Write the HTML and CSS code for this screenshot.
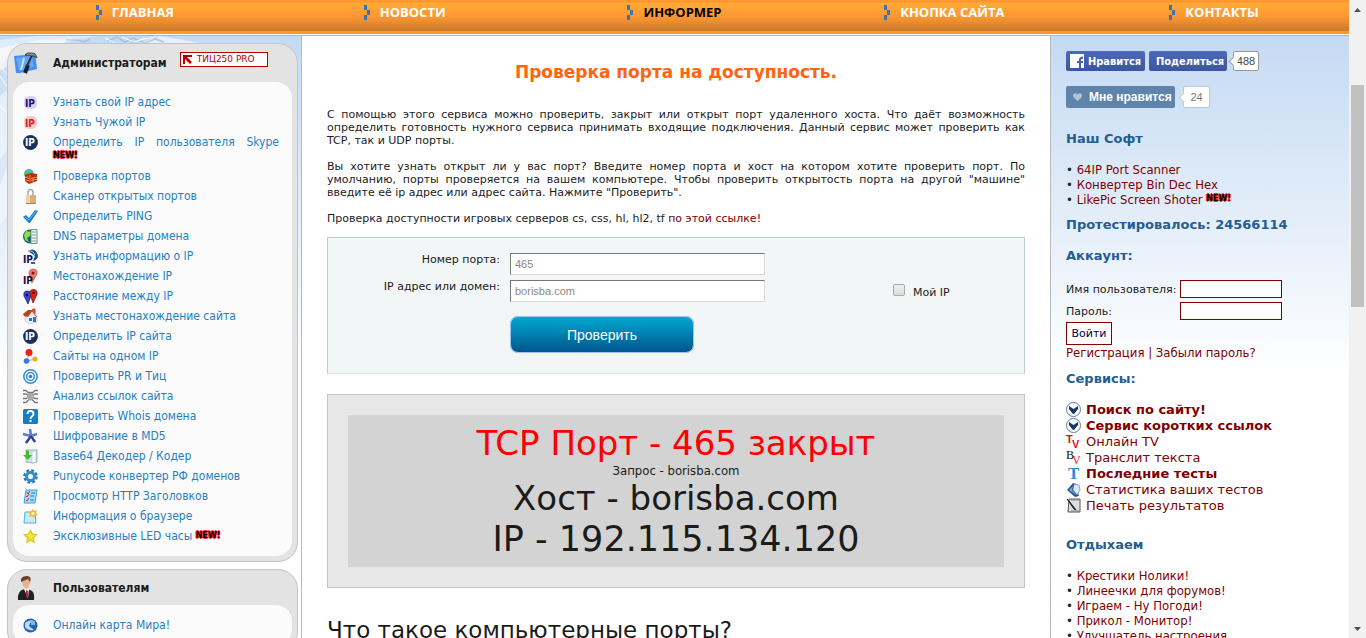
FILE: index.html
```html
<!DOCTYPE html>
<html lang="ru">
<head>
<meta charset="utf-8">
<title>Проверка порта на доступность</title>
<link rel="stylesheet" href="styles.css">
</head>
<body>
<div class="viewport">
<div class="page">
  <nav class="nav">
    <a href="#"><svg class="chev" viewBox="0 0 6 15"><path d="M0 0h3v5h3v5h-3v5h-3v-5h3v-5h-3z"/></svg>ГЛАВНАЯ</a>
    <a href="#"><svg class="chev" viewBox="0 0 6 15"><path d="M0 0h3v5h3v5h-3v5h-3v-5h3v-5h-3z"/></svg>НОВОСТИ</a>
    <a href="#" class="active"><svg class="chev" viewBox="0 0 6 15"><path d="M0 0h3v5h3v5h-3v5h-3v-5h3v-5h-3z"/></svg>ИНФОРМЕР</a>
    <a href="#"><svg class="chev" viewBox="0 0 6 15"><path d="M0 0h3v5h3v5h-3v5h-3v-5h3v-5h-3z"/></svg>КНОПКА САЙТА</a>
    <a href="#"><svg class="chev" viewBox="0 0 6 15"><path d="M0 0h3v5h3v5h-3v5h-3v-5h3v-5h-3z"/></svg>КОНТАКТЫ</a>
  </nav>
  <div class="columns">
    <aside class="left">
      <svg class="ice" viewBox="0 0 301 220"><g fill="#fff"><path opacity=".45" d="M0 4l36-4h60l-70 14-26 14zM0 60l7-6v60l-7 10zM0 150l7-20v50l-7 9z"/><path opacity=".6" d="M0 12l40-8 40-1-50 12-30 20zM160 0l40 7h-60z"/></g><g fill="none" stroke="#8fb2d8" stroke-width="1.500" opacity=".6"><path d="M66 4h12l6 2 6-3M108 5l9-4 8 5 8-4 12 5 10-4 8 3M152 1l12 5M128 3l8 5"/></g><g stroke="#fff" fill="none"><path d="M105 2l10 5M122 1l12 5 12-4M140 4l15-3M0 30l8 10M0 40l8 12M0 70l6 6"/></g></svg>
      <section class="panel">
        <h2 class="panel-head first"><svg class="head-icon" viewBox="0 0 26 24"><path d="M1 5l11-1 1-2h9l2 16-17 4H3z" fill="#438cf0"/><path d="M3 7l16-3 2 12-15 4z" fill="#64a7f8"/><path d="M8 19l3-12" stroke="#c8e1ff" stroke-width="2"/><path d="M12 22l3-8" stroke="#17202b" stroke-width="4"/><path d="M14 15l5-11" stroke="#2d3238" stroke-width="2"/><path d="M12 4q2-3 7-2 4 0 5 5-3-3-6-2-2-2-4 0z" fill="#8b949b" stroke="#222" stroke-width=".7"/></svg>Администраторам<a class="pr" href="#"><svg viewBox="0 0 9 9"><path d="M0 0h9v2H4l5 5-2 2-5-5v5H0z" fill="#b90000"/></svg>ТИЦ250 PRO</a></h2>
        <ul class="menu">
          <li><svg viewBox="0 0 15 15"><rect x="1" y="1" width="13" height="13" rx="5" fill="#d7d2ee"/><text class="ip" x="2" y="12" fill="#1b1464">IP</text></svg><a href="#">Узнать свой IP адрес</a></li>
          <li><svg viewBox="0 0 15 15"><rect x="1" y="1" width="13" height="13" rx="5" fill="#ffc9c7"/><text class="ip" x="2" y="12" fill="#d8201e">IP</text></svg><a href="#">Узнать Чужой IP</a></li>
          <li><svg viewBox="0 0 15 15"><circle cx="7.500" cy="7.500" r="7.400" fill="#16305c"/><text class="ip" x="2" y="11" fill="#fff">IP</text></svg><a href="#">Определить IP пользователя Skype <b class="new">NEW!</b></a></li>
          <li><svg viewBox="0 0 15 15"><circle cx="6" cy="5" r="5" fill="#49b7d5"/><path d="M3 1l4 3-3 3-3-2z" fill="#5cbb4a"/><path d="M2 6l6-2 6 1v7l-8 3-4-3z" fill="#b33110"/><path d="M2 8l5 2 7-2M2 11l5 1 7-2M7 6v3M4 7v2M10 9v4" stroke="#f6a252" stroke-width=".8" fill="none"/></svg><a href="#">Проверка портов</a></li>
          <li><svg viewBox="0 0 15 15"><path d="M5 8V3.500q0-3 2.500-3t2.500 3V8" fill="none" stroke="#aaa" stroke-width="1.500"/><path d="M3 6h10v9H3z" fill="#d9b078"/><path d="M3 6h4v9H3z" fill="#f0d2a2"/><path d="M3 14.500h10" stroke="#b58745"/></svg><a href="#">Сканер открытых портов</a></li>
          <li><svg viewBox="0 0 15 15"><path d="M0 8l3-2 3 3 6-8 3 1-8 12H6z" fill="#207bc9"/><path d="M2 8l4 3 7-9" stroke="#62baf0" fill="none"/></svg><a href="#">Определить PING</a></li>
          <li><svg viewBox="0 0 15 15"><circle cx="7" cy="7.500" r="7" fill="#195a89"/><path d="M3 2l5 1-1 4-3 2 2 4-4-2-1-5z" fill="#8fe03f"/><path d="M8 .500h6v14H8z" fill="#eef5f2" stroke="#689886"/><path d="M9 3h4M9 6h4M9 9h4M9 12h4" stroke="#78a090"/></svg><a href="#">DNS параметры домена</a></li>
          <li><svg viewBox="0 0 15 15"><path d="M5 2q6-4 9 2t-4 8l2-5z" fill="#204d83"/><path d="M5 2q5-1 7 4" stroke="#b8cfe8" fill="none"/><text class="ip" x="0" y="14" fill="#10134d">IP</text><path d="M8 13h4v2H8z" fill="#365e91"/></svg><a href="#">Узнать информацию о IP</a></li>
          <li><svg viewBox="0 0 15 15"><path d="M9 14L6 5q0-5 4-5 5 0 4 5z" fill="#ef7868" stroke="#9a3830" stroke-width=".5"/><circle cx="10" cy="4" r="1.500" fill="#732019"/><text class="ip" x="0" y="15" fill="#15133b">IP</text></svg><a href="#">Местонахождение IP</a></li>
          <li><svg viewBox="0 0 15 15"><path d="M5 15L1 7q-1-5 3-5 5 0 4 5z" fill="#3847ce" stroke="#151b59" stroke-width=".7"/><path d="M10 14L7 5q-1-4 3-4.500 5 0 4 5z" fill="#e02019" stroke="#6b1111" stroke-width=".7"/><circle cx="4" cy="6" r="1.300" fill="#080d46"/><circle cx="10.500" cy="4" r="1.300" fill="#580706"/></svg><a href="#">Расстояние между IP</a></li>
          <li><svg viewBox="0 0 15 15"><path d="M2 7l6-5 6 7v4l-8 2-4-3z" fill="#e9edf5" stroke="#a4b1c4" stroke-width=".5"/><path d="M0 5l5-4h5L5 8 1 7z" fill="#ba451d"/><path d="M9 1l1-1h2v5zM9 2l5 6" fill="#d65529" stroke="#ce4d22"/><path d="M6 9h3v3H6zM10 8h3v5h-3z" fill="#2b73cf"/></svg><a href="#">Узнать местонахождение сайта</a></li>
          <li><svg viewBox="0 0 15 15"><circle cx="7.500" cy="7.500" r="7.400" fill="#16305c"/><text class="ip" x="2" y="11" fill="#fff">IP</text></svg><a href="#">Определить IP сайта</a></li>
          <li><svg viewBox="0 0 15 15"><path d="M6 4l-2 8 8-2" fill="none" stroke="#aaa"/><circle cx="6" cy="3.500" r="3.500" fill="#ee201c"/><circle cx="3.500" cy="12" r="2.800" fill="#3579e8"/><circle cx="12" cy="10" r="2.600" fill="#f5a629"/></svg><a href="#">Сайты на одном IP</a></li>
          <li><svg viewBox="0 0 15 15"><g fill="none" stroke="#2c92d6" stroke-width="1.500"><circle cx="7.500" cy="7.500" r="6.700"/><circle cx="7.500" cy="7.500" r="3.900"/></g><circle cx="7.500" cy="7.500" r="1.800" fill="#2082ca"/></svg><a href="#">Проверить PR и Тиц</a></li>
          <li><svg viewBox="0 0 15 15"><path d="M0 1.500h3l2 2h5l2-2h3M0 5h3l2 1h5l2-1h3M0 9.500h3l2-1h5l2 1h3M0 13.500h3l3-3h3l3 3h3" fill="none" stroke="#777" stroke-width="1.300"/><path d="M5 4h5l1 4-2 3H6L4 8z" fill="#aaa"/></svg><a href="#">Анализ ссылок сайта</a></li>
          <li><svg viewBox="0 0 15 15"><rect width="15" height="15" rx="1.500" fill="#147fc4"/><path d="M4.500 5q0-3 3-3t3 3q0 1.500-1.500 2.300T7.500 10" fill="none" stroke="#fff" stroke-width="2"/><path d="M6.500 11h2v2h-2z" fill="#fff"/></svg><a href="#">Проверить Whois домена</a></li>
          <li><svg viewBox="0 0 15 15"><path d="M7 0l1 7M8 7l6-2M8 7l4 6M8 7l-5 7M8 7L0 5" stroke="#6079dd" stroke-width="2.600"/><path d="M8 7l-5 7M8 7l4 6" stroke="#304093" stroke-width="2"/></svg><a href="#">Шифрование в MD5</a></li>
          <li><svg viewBox="0 0 15 15"><path d="M3 1h11v12l-4 1-7-1z" fill="#cce5ec" stroke="#839ba4" stroke-width=".7"/><path d="M9 3l4-2v12l-4 1z" fill="#f9fdfe" stroke="#9bb2b8" stroke-width=".5"/><path d="M3 1l3 1v4h3L5 11 0 6h3z" fill="#49b92c"/></svg><a href="#">Base64 Декодер / Кодер</a></li>
          <li><svg viewBox="0 0 15 15"><circle cx="7.500" cy="7.500" r="6" fill="none" stroke="#2676b5" stroke-width="2.600" stroke-dasharray="2.700 2"/><circle cx="7.500" cy="7.500" r="4" fill="#fff" stroke="#348ecc" stroke-width="3"/></svg><a href="#">Punycode конвертер РФ доменов</a></li>
          <li><svg viewBox="0 0 15 15"><path d="M3 1h11l-2 13H1z" fill="#a5ddfa" stroke="#3ba0d6"/><path d="M8 4h4M7 7h4M7 11h4" stroke="#287bbf"/><path d="M4 3l1 2 2-3M3 7l1 1 2-3M3 11l1 1 2-3" stroke="#bd2e2b" fill="none"/></svg><a href="#">Просмотр HTTP Заголовков</a></li>
          <li><svg viewBox="0 0 15 15"><path d="M2 3h10l1 11H1z" fill="#c3ecfc" stroke="#55afd8"/><path d="M10 0l1 2 3-1-1 3 2 2-3 1-1 2-2-2-3 1 1-3-2-2 3-1z" fill="#efb83c"/><circle cx="10" cy="4.500" r="1.800" fill="#fff3a0"/></svg><a href="#">Информация о браузере</a></li>
          <li><svg viewBox="0 0 15 15"><path d="M7.500 0l2.300 4.600 5.200.700-4 3.700 1 5.500-4.500-2.700L3 14.500 4 9 0 5.300l5.200-.700z" fill="#d9cb18"/><path d="M7.500 2l1 4h4l-3 3 1 3-3-2-3 2 1-4-3-2 4-1z" fill="#efe63a"/></svg><a href="#">Эксклюзивные LED часы <b class="new">NEW!</b></a></li>
        </ul>
      </section>
      <section class="panel">
        <h2 class="panel-head"><svg class="head-icon" viewBox="0 0 26 24"><path d="M5 24q-1-10 7-11l5 1q5 1 4 10z" fill="#202124"/><path d="M11 13h5l-1 9z" fill="#fff"/><path d="M13 14l2 1v8l-2-2z" fill="#b81e22"/><path d="M9 5q0-5 5-5 5 1 3 8l-3 5-4-3z" fill="#e8b18d"/><path d="M8 6q-1-6 6-6 5 0 3 6l-2-3z" fill="#68412c"/></svg>Пользователям</h2>
        <ul class="menu">
          <li><svg viewBox="0 0 15 15"><circle cx="7.500" cy="7.500" r="7" fill="#2762ae"/><path d="M2 5q5-4 9-2l-4 2-1 3 5 4q-6 1-9-3z" fill="#b8dcfa"/><path d="M8 3h4v4H8z" fill="#79b7ef"/></svg><a href="#">Онлайн карта Мира!</a></li>
        </ul>
      </section>
    </aside>
    <main class="main">
      <h1>Проверка порта на доступность.</h1>
      <p>С помощью этого сервиса можно проверить, закрыт или открыт порт удаленного хоста. Что даёт возможность определить готовность нужного сервиса принимать входящие подключения. Данный сервис может проверить как TCP, так и UDP порты.</p>
      <p>Вы хотите узнать открыт ли у вас порт? Введите номер порта и хост на котором хотите проверить порт. По умолчанию, порты проверяется на вашем компьютере. Чтобы проверить открытость порта на другой "машине" введите её ip адрес или адрес сайта. Нажмите "Проверить".</p>
      <p>Проверка доступности игровых серверов cs, css, hl, hl2, tf <a class="dark" href="#">по этой ссылке!</a></p>
      <form class="check">
        <label class="name" for="port">Номер порта:</label><input class="field" id="port" type="text" value="465">
        <label class="name" for="host">IP адрес или домен:</label><input class="field" id="host" type="text" value="borisba.com">
        <div class="mine"><input type="checkbox" id="mine"><label for="mine">Мой IP</label></div>
        <button class="go" type="button">Проверить</button>
      </form>
      <div class="result">
        <div class="result-in">
          <div class="big closed">TCP Порт - 465 закрыт</div>
          <div class="small">Запрос - borisba.com</div>
          <div class="big">Хост - borisba.com</div>
          <div class="big addr">IP - 192.115.134.120</div>
        </div>
      </div>
      <h2 class="what">Что такое компьютерные порты?</h2>
    </main>
    <aside class="right">
      <div class="social">
        <button class="fb" type="button"><svg viewBox="0 0 14 14"><path d="M0 0h14v14H0z" fill="#fff"/><path d="M10 14V6q0-2.500 3-2.500M7 8h6" fill="none" stroke="#4560ad" stroke-width="2"/></svg>Нравится</button>
        <button class="fb share" type="button">Поделиться</button>
        <span class="count">488</span>
      </div>
      <div class="social">
        <button class="vk" type="button"><svg viewBox="0 0 9 8"><path d="M4.500 8L1 5Q-1 2 1 .500q2-1 3.500 1 1.500-2 3.500-1Q10 2 8 5z" fill="#b0c2d6"/></svg>Мне нравится</button>
        <span class="count vkc">24</span>
      </div>
      <h3 class="soft">Наш Софт</h3>
      <ul class="dots">
        <li><a href="#">64IP Port Scanner</a></li>
        <li><a href="#">Конвертер Bin Dec Hex</a></li>
        <li><a href="#">LikePic Screen Shoter</a> <b class="new">NEW!</b></li>
      </ul>
      <h3 class="tested">Протестировалось: 24566114</h3>
      <h3 class="account">Аккаунт:</h3>
      <form class="login">
        <label for="user">Имя пользователя:</label><input id="user" type="text">
        <label for="pass">Пароль:</label><input id="pass" type="password">
        <button type="button">Войти</button>
      </form>
      <div class="links"><a href="#">Регистрация</a> | <a href="#">Забыли пароль?</a></div>
      <h3 class="services">Сервисы:</h3>
      <ul class="svc">
        <li><svg viewBox="0 0 15 15"><circle cx="7.500" cy="7.500" r="7" fill="#fff" stroke="#6078a0"/><path d="M3 4l4.500 3L12 4v3l-4 5H7L3 7z" fill="#183568"/></svg><a href="#"><b>Поиск по сайту!</b></a></li>
        <li><svg viewBox="0 0 15 15"><circle cx="7.500" cy="7.500" r="7" fill="#fff" stroke="#6078a0"/><path d="M3 4l4.500 3L12 4v3l-4 5H7L3 7z" fill="#183568"/></svg><a href="#"><b>Сервис коротких ссылок</b></a></li>
        <li><svg viewBox="0 0 15 15"><text class="tv" x="0" y="9" fill="#d30c0c">T<tspan x="6" y="14" fill="#ed1010">V</tspan></text></svg><a href="#">Онлайн TV</a></li>
        <li><svg viewBox="0 0 15 15"><text class="bv" x="0" y="9" fill="#111">B<tspan x="6" y="14" fill="#ed2020">V</tspan></text></svg><a href="#">Транслит текста</a></li>
        <li><svg viewBox="0 0 15 15"><text class="tt" x="2" y="13" fill="#2190d8">T</text></svg><a href="#"><b>Последние тесты</b></a></li>
        <li><svg viewBox="0 0 15 15"><path d="M1 8l6-7 3 1-3 5 5 4 1 3-4 1z" fill="#2b579a"/><path d="M8 2l5 1 1 5-3 5-4-5z" fill="#d9e9fb" stroke="#496c9c" stroke-width=".6"/><path d="M3 8l4-4-1 4 4 5z" fill="#78a6e4"/></svg><a href="#">Статистика ваших тестов</a></li>
        <li><svg viewBox="0 0 15 15"><path d="M3 1h11v13H2z" fill="#ddd" stroke="#555"/><path d="M1 1l2 2 7 9-2-1z" fill="#222" stroke="#222"/><path d="M5 13h8M5 2h8" stroke="#888"/></svg><a href="#">Печать результатов</a></li>
      </ul>
      <h3 class="rest">Отдыхаем</h3>
      <ul class="dots">
        <li><a href="#">Крестики Нолики!</a></li>
        <li><a href="#">Линеечки для форумов!</a></li>
        <li><a href="#">Играем - Ну Погоди!</a></li>
        <li><a href="#">Прикол - Монитор!</a></li>
        <li><a href="#">Улучшатель настроения</a></li>
      </ul>
    </aside>
  </div>
</div>
<div class="scroll"><i class="up"></i><i class="thumb"></i><i class="down"></i></div>
</div>
</body>
</html>
```
FILE: styles.css
```css
* { box-sizing: border-box; }
body { margin: 0; font: 11px/13px "DejaVu Sans", sans-serif; color: #1b1b1b; background: #fff; }
a { color: inherit; text-decoration: none; }
ul { list-style: none; margin: 0; padding: 0; }
h1, h2, h3, p { margin: 0; }
input, button { font: inherit; color: inherit; margin: 0; }
.viewport { display: flex; height: 100vh; overflow: hidden; }
.page { flex: 1; min-width: 0; }

.nav { display: grid; grid-template-columns: repeat(5, 1fr); height: 36px; border-bottom: 1px solid #b5b5b5; background: linear-gradient(#ff9630 0 2px, #ffaa36 3px, #ff9832 16px, #c97b2d 31px, #ff9630 31px 34px, #fff 34px); }
.nav a { display: flex; justify-content: center; gap: 10px; padding-top: 5px; font: bold 13px/15px "Open Sans", sans-serif; color: #fff; }
.nav .active { color: #000; }
.chev { width: 6px; height: 15px; fill: #3a74b0; }

.columns { display: flex; align-items: flex-start; }
.left, .right { background: linear-gradient(#c4daf3, #fff 340px); min-height: 100vh; flex: none; position: relative; }
.left { width: 302px; border-right: 1px solid #b9b9b9; padding: 7px 3px 7px 7px; display: flex; flex-direction: column; gap: 7px; }
.ice { position: absolute; left: 0; top: 0; width: 301px; height: 220px; }
.panel { position: relative; border: 1px solid #c4c4c4; border-radius: 20px; background: #e3e3e3; padding: 0 5px 5px; }
.panel-head { display: flex; align-items: center; height: 35px; font: bold 12px/16px "DejaVu Sans Condensed", sans-serif; }
.panel-head.first { height: 38px; }
.head-icon { width: 26px; height: 24px; margin-right: 14px; }
.pr { display: flex; align-items: center; gap: 5px; margin: 0 0 8px 13px; width: 88px; height: 15px; padding-left: 2px; border: 1px solid #b90000; background: #fff; font: 9px/10px "DejaVu Sans", sans-serif; color: #b90000; white-space: pre; }
.pr svg { width: 9px; height: 9px; }
.menu { background: #fbfbfb; border-radius: 16px; padding: 10px 13px 10px 10px; font: 12px/14px "DejaVu Sans Condensed", sans-serif; color: #2580c3; }
.menu li { display: flex; gap: 15px; padding: 3px 0; text-align: justify; }
.menu svg, .svc svg { width: 15px; height: 15px; flex: none; overflow: visible; }
.menu svg { margin-bottom: -1px; }
.menu a { flex: 1; }
.ip { font: bold 10px "DejaVu Sans Condensed", sans-serif; }
.new { display: inline-block; width: 26px; height: 9px; font: bold 8px/9px "DejaVu Sans", sans-serif; color: #000; text-shadow: 1px 0 #f33, -1px 0 #f33, 0 1px #f33, 0 -1px #f33; text-align: left; vertical-align: top; margin: 2px 0; }

.main { flex: 1; min-width: 0; padding: 26px 25px 0; }
h1 { font-size: 17px; line-height: 20px; text-align: center; color: #ff6410; margin-bottom: 26px; }
.main p { text-align: justify; margin-bottom: 13px; }
.main p:last-of-type { margin-bottom: 12px; }
.dark { color: #700; }
.check { display: grid; grid-template-columns: 172px 255px 1fr; column-gap: 10px; row-gap: 5px; border: 1px solid #b9cfd0; border-bottom-color: #d8e5e4; background: #f2f6f7; padding: 15px 0 20px; }
.name { grid-column: 1; text-align: right; }
.field { grid-column: 2; height: 22px; border: 1px solid #d9d9d9; border-top-color: #777; border-left-color: #777; background: #fff; padding: 0 4px; color: #888; font: 11px "Liberation Sans", sans-serif; }
.mine { grid-column: 3; display: flex; align-items: center; gap: 8px; padding-left: 118px; }
.mine input { appearance: none; width: 12px; height: 12px; border: 1px solid #aaa; border-radius: 2px; background: linear-gradient(#eee, #dcdcdc); margin-bottom: 2px; }
.mine label { padding-top: 3px; }
.go { grid-column: 2; width: 184px; height: 37px; margin-top: 9px; border: 1px solid #5b9fea; outline: 1px solid #a0c3f7; outline-offset: -1px; border-radius: 8px; background: linear-gradient(#00a8d0, #00568f); color: #fff; font: 14px "Liberation Sans", sans-serif; }
.result { margin-top: 20px; border: 1px solid #c4c4c4; background: #e7e7e7; padding: 20px; }
.result-in { background: #d3d3d3; text-align: center; padding: 8px 0 7px; }
.big { font-size: 34px; line-height: 41px; }
.addr { font-size: 35px; }
.closed { color: #f00; }
.small { font: 13px/14px "DejaVu Sans Condensed", sans-serif; }
.what { margin-top: 28px; font-size: 23px; font-weight: normal; line-height: 28px; }

.right { width: 299px; border-left: 1px solid #b9b9b9; padding: 15px 15px 0; }
.social { display: flex; gap: 4px; height: 20px; margin-bottom: 16px; align-items: center; }
.social button { border: 0; border-radius: 2px; color: #fff; display: flex; align-items: center; white-space: nowrap; }
.social .fb { width: 79px; height: 20px; padding: 0 0 0 4px; gap: 4px; background: linear-gradient(#4d69ba, #3b55a0); font: bold 11px "DejaVu Sans Condensed", sans-serif; }
.social .share { width: 78px; padding-left: 7px; }
.fb svg { width: 14px; height: 14px; }
.social .vk { width: 109px; height: 22px; padding: 0 0 0 7px; gap: 7px; background: #5f83aa; font: bold 12px "Liberation Sans", sans-serif; }
.vk svg { width: 9px; height: 8px; }
.count { position: relative; width: 26px; height: 20px; margin-left: 2px; border: 1px solid #999; border-radius: 2px; background: #fff; font: 11px/18px "Liberation Sans", sans-serif; text-align: center; color: #444; }
.count::before { content: ""; position: absolute; left: -4px; top: 6px; width: 6px; height: 6px; background: #fff; border: solid #999; border-width: 0 0 1px 1px; transform: rotate(45deg); }
.vkc { width: 27px; height: 22px; line-height: 20px; margin-left: 4px; border-color: #bac7d4; color: #777; }
.vkc::before { top: 7px; border-color: #bac7d4; }
h3 { font-size: 13px; line-height: 16px; color: #235d93; }
.soft { margin: 24px 0 15px; }
.dots { font: 13px/15px "DejaVu Sans Condensed", sans-serif; color: #800000; }
.dots li::before { content: "• "; color: #222; }
.tested { margin-top: 10px; }
.account { margin: 15px 0 16px; }
.login { display: grid; grid-template-columns: 114px 102px; row-gap: 4px; align-items: center; }
.login input { height: 18px; width: 102px; border: 1px solid #800000; background: #fff; padding: 0 3px; }
.login label { white-space: nowrap; }
.login button { width: 46px; height: 23px; margin-top: -2px; border: 1px solid #800000; background: #fff; padding: 0; color: #000050; }
.links { font: 13px/15px "DejaVu Sans Condensed", sans-serif; color: #800000; }
.services { margin: 11px 0 15px; }
.svc { font-size: 13px; line-height: 16px; color: #800000; }
.svc li { display: flex; gap: 5px; }
.tv { font: bold 11px "Liberation Sans", sans-serif; }
.bv { font: 12px "Liberation Serif", serif; }
.tt { font: bold 17px "Liberation Serif", serif; }
.rest { margin: 23px 0 15px; }

.scroll { flex: none; width: 17px; background: #f1f1f1; display: grid; grid-template-rows: 85px 222px 1fr; justify-items: center; }
.scroll i { display: block; }
.up, .down { width: 7px; height: 4px; background: #505050; clip-path: polygon(50% 0, 100% 100%, 0 100%); margin-top: 8px; }
.thumb { width: 13px; background: #c1c1c1; }
.down { clip-path: polygon(0 0, 100% 0, 50% 100%); align-self: end; margin-bottom: 7px; }
```
